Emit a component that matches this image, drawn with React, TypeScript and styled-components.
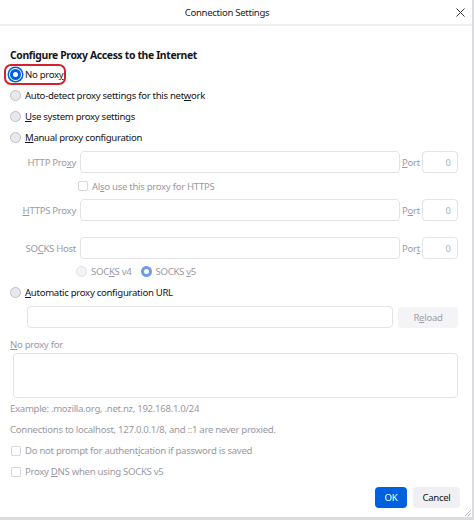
import React from 'react'
import styled, { createGlobalStyle, css } from 'styled-components'

const GlobalStyle = createGlobalStyle`
  html, body {
    margin: 0;
    padding: 0;
    background: #fff;
  }
  body {
    font-family: "Noto Sans", "Open Sans", sans-serif;
    font-size: 9.6px;
    letter-spacing: -0.3px;
    color: #15141a;
  }
`

const Window = styled.div`
  position: relative;
  width: 474px;
  height: 520px;
  box-sizing: border-box;
  border-right: 2px solid #dcdcdf;
  border-bottom: 3px solid #dcdcdf;
  display: flex;
  flex-direction: column;
  background: #fff;
`

const TitleBar = styled.div`
  display: flex;
  align-items: center;
  height: 24px;
  border-bottom: 2px solid #efeff1;
`

const Title = styled.div`
  flex: 1;
  text-align: center;
  color: #222;
`

const Close = styled.div`
  width: 18px;
  box-sizing: border-box;
  padding-right: 6px;
  display: flex;
  justify-content: center;
`

const Body = styled.div`
  display: flex;
  flex-direction: column;
  padding: 0 14px 0 10px;
`

const Heading = styled.div`
  margin-top: 20px;
  height: 18px;
  line-height: 18px;
  font-weight: bold;
  font-size: 10.4px;
  letter-spacing: -0.35px;
`

const Row = styled.div<{ $h?: number; $mt?: number; $indent?: number; $gap?: number }>`
  display: flex;
  align-items: center;
  height: ${(p) => p.$h ?? 21}px;
  margin-top: ${(p) => p.$mt ?? 0}px;
  padding-left: ${(p) => p.$indent ?? 0}px;
  gap: ${(p) => p.$gap ?? 4}px;
  position: relative;
`

const Label = styled.span<{ $disabled?: boolean }>`
  color: ${(p) => (p.$disabled ? '#9a9aa2' : '#15141a')};
  white-space: nowrap;
`

const Ak = styled.span`
  text-decoration: underline;
  text-underline-offset: 1px;
`

const Radio = styled.span<{ $checked?: boolean; $disabled?: boolean; $focus?: boolean }>`
  flex: none;
  width: 11px;
  height: 11px;
  box-sizing: border-box;
  border-radius: 50%;
  border: 1px solid ${(p) => (p.$disabled ? '#e0e0e4' : '#bfbfc6')};
  background: ${(p) => (p.$disabled ? '#f4f4f6' : '#e9e9ed')};
  ${(p) =>
    p.$checked &&
    css`
      border: 3px solid ${p.$disabled ? '#6e9de6' : '#0061e0'};
      background: #fff;
    `}
  ${(p) =>
    p.$focus &&
    css`
      box-shadow: 0 0 0 1px #fff, 0 0 0 2.5px #0061e0;
    `}
`

const Check = styled.span`
  flex: none;
  width: 10px;
  height: 10px;
  margin-left: 1px;
  box-sizing: border-box;
  border: 1px solid #d6d6db;
  border-radius: 2px;
  background: #fff;
`

const Highlight = styled.span`
  position: absolute;
  left: -6px;
  top: 0;
  width: 62px;
  height: 21px;
  box-sizing: border-box;
  border: 2px solid #d7202f;
  border-radius: 7px;
  pointer-events: none;
`

const FieldRow = styled.div<{ $mt: number }>`
  display: grid;
  grid-template-columns: 70px 320px 22px 36px;
  align-items: center;
  height: 22px;
  margin-top: ${(p) => p.$mt}px;
`

const FieldLabel = styled.span`
  text-align: right;
  padding-right: 4px;
  color: #9a9aa2;
  white-space: nowrap;
`

const PortLabel = styled.span`
  padding-left: 2px;
  color: #9a9aa2;
`

const Field = styled.input<{ $w?: number; $h?: number }>`
  appearance: none;
  box-sizing: border-box;
  width: ${(p) => (p.$w ? `${p.$w}px` : '100%')};
  height: ${(p) => p.$h ?? 22}px;
  margin: 0;
  padding: 0 6px;
  border: 1px solid #e4e4e8;
  border-radius: 4px;
  background: #fff;
  font: inherit;
  color: #b0b0b6;
  text-align: right;
  outline: none;
  &:disabled {
    background: #fff;
    color: #b0b0b6;
  }
`

const Area = styled.div`
  margin-left: 3px;
  width: 445px;
  height: 45px;
  box-sizing: border-box;
  border: 1px solid #e4e4e8;
  border-radius: 4px;
`

const UrlRow = styled.div`
  display: flex;
  align-items: center;
  gap: 5px;
  margin-top: 3px;
  padding-left: 17px;
  height: 22px;
`

const Button = styled.div<{ $variant?: 'primary' | 'plain' | 'disabled'; $w: number }>`
  width: ${(p) => p.$w}px;
  height: 21px;
  border-radius: 4px;
  display: flex;
  align-items: center;
  justify-content: center;
  box-sizing: border-box;
  ${(p) =>
    p.$variant === 'primary'
      ? css`
          background: #0061e0;
          color: #fff;
        `
      : p.$variant === 'disabled'
      ? css`
          background: #f4f4f6;
          color: #a0a0a8;
        `
      : css`
          background: #f0f0f4;
          color: #15141a;
        `}
`

const Footer = styled.div`
  display: flex;
  justify-content: flex-end;
  gap: 6px;
  margin-top: 5px;
  margin-right: -2px;
`

const Grip = styled.svg`
  position: absolute;
  right: 0;
  bottom: 0;
`

const App = () => {
  return (
    <Window>
      <GlobalStyle />
      <TitleBar>
        <Title>Connection Settings</Title>
        <Close>
          <svg width="9" height="9" viewBox="0 0 9 9">
            <path d="M0.5 0.5 L8.5 8.5 M8.5 0.5 L0.5 8.5" stroke="#333" strokeWidth="1" />
          </svg>
        </Close>
      </TitleBar>
      <Body>
        <Heading>Configure Proxy Access to the Internet</Heading>
        <Row>
          <Radio $checked $focus />
          <Label>
            No prox<Ak>y</Ak>
          </Label>
          <Highlight />
        </Row>
        <Row>
          <Radio />
          <Label>
            Auto-detect proxy settings for this net<Ak>w</Ak>ork
          </Label>
        </Row>
        <Row>
          <Radio />
          <Label>
            <Ak>U</Ak>se system proxy settings
          </Label>
        </Row>
        <Row>
          <Radio />
          <Label>
            <Ak>M</Ak>anual proxy configuration
          </Label>
        </Row>

        <FieldRow $mt={3}>
          <FieldLabel>
            HTTP Pro<Ak>x</Ak>y
          </FieldLabel>
          <Field disabled />
          <PortLabel>
            <Ak>P</Ak>ort
          </PortLabel>
          <Field disabled value="0" readOnly />
        </FieldRow>
        <Row $h={22} $mt={2} $indent={67}>
          <Check />
          <Label $disabled>
            Al<Ak>s</Ak>o use this proxy for HTTPS
          </Label>
        </Row>
        <FieldRow $mt={2}>
          <FieldLabel>
            <Ak>H</Ak>TTPS Proxy
          </FieldLabel>
          <Field disabled />
          <PortLabel>
            P<Ak>o</Ak>rt
          </PortLabel>
          <Field disabled value="0" readOnly />
        </FieldRow>
        <FieldRow $mt={16}>
          <FieldLabel>
            SO<Ak>C</Ak>KS Host
          </FieldLabel>
          <Field disabled />
          <PortLabel>
            Por<Ak>t</Ak>
          </PortLabel>
          <Field disabled value="0" readOnly />
        </FieldRow>
        <Row $h={20} $mt={2} $indent={66} $gap={9}>
          <Row $gap={4}>
            <Radio $disabled />
            <Label $disabled>
              SOC<Ak>K</Ak>S v4
            </Label>
          </Row>
          <Row $gap={4}>
            <Radio $checked $disabled />
            <Label $disabled>
              SOCKS <Ak>v</Ak>5
            </Label>
          </Row>
        </Row>
        <Row $mt={1}>
          <Radio />
          <Label>
            <Ak>A</Ak>utomatic proxy configuration URL
          </Label>
        </Row>
        <UrlRow>
          <Field disabled $w={366} />
          <Button $variant="disabled" $w={60}>
            R<Ak>e</Ak>load
          </Button>
        </UrlRow>
        <Row $h={18} $mt={7}>
          <Label $disabled>
            <Ak>N</Ak>o proxy for
          </Label>
        </Row>
        <Area />
        <Row>
          <Label $disabled>Example: .mozilla.org, .net.nz, 192.168.1.0/24</Label>
        </Row>
        <Row>
          <Label $disabled>Connections to localhost, 127.0.0.1/8, and ::1 are never proxied.</Label>
        </Row>
        <Row>
          <Check />
          <Label $disabled>
            Do not prompt for authent<Ak>i</Ak>cation if password is saved
          </Label>
        </Row>
        <Row>
          <Check />
          <Label $disabled>
            Proxy <Ak>D</Ak>NS when using SOCKS v5
          </Label>
        </Row>
        <Footer>
          <Button $variant="primary" $w={32}>
            OK
          </Button>
          <Button $variant="plain" $w={47}>
            Cancel
          </Button>
        </Footer>
      </Body>
      <Grip width="9" height="9" viewBox="0 0 9 9">
        <path d="M8 2 L2 8 M8 5 L5 8" stroke="#b8b8bc" strokeWidth="1" />
      </Grip>
    </Window>
  )
}

export default App
